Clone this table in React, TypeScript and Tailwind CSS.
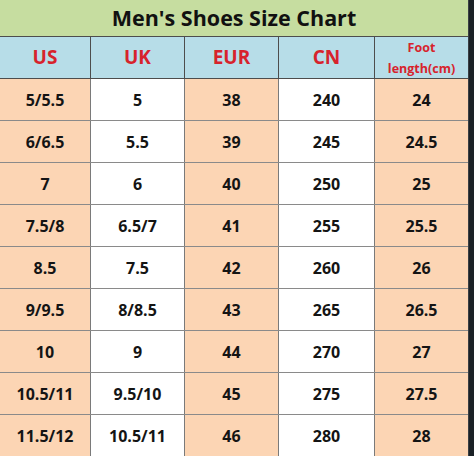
import React from "react";

const rows = [
  ["5/5.5", "5", "38", "240", "24"],
  ["6/6.5", "5.5", "39", "245", "24.5"],
  ["7", "6", "40", "250", "25"],
  ["7.5/8", "6.5/7", "41", "255", "25.5"],
  ["8.5", "7.5", "42", "260", "26"],
  ["9/9.5", "8/8.5", "43", "265", "26.5"],
  ["10", "9", "44", "270", "27"],
  ["10.5/11", "9.5/10", "45", "275", "27.5"],
  ["11.5/12", "10.5/11", "46", "280", "28"],
];

const widths = ["w-[91px]", "w-[94px]", "w-[94px]", "w-[96px]", "w-[93px]"];

export default function App() {
  return (
    <div className="flex w-[474px] h-[456px] overflow-hidden bg-[#1b2126]" style={{ fontFamily: "'Open Sans', 'Liberation Sans', sans-serif" }}>
      <div className="flex flex-col w-[469px] border-r border-[#3a3f44]">
        {/* title */}
        <div className="h-[37px] bg-[#c6dda0] border-b border-[#4d4d4d] flex items-center justify-center text-[21.5px] font-bold text-[#111] shrink-0">
          Men's Shoes Size Chart
        </div>
        {/* header */}
        <div className="flex h-[42px] bg-[#b7dde8] border-b border-[#4d4d4d] shrink-0">
          {["US", "UK", "EUR", "CN"].map((h, i) => (
            <div key={h} className={`${widths[i]} flex items-center justify-center border-r border-[#4d4d4d] text-[19px] font-bold text-[#d7232c]`}>
              {h}
            </div>
          ))}
          <div className={`${widths[4]} flex flex-col items-center justify-center text-[12.5px] leading-[21px] font-bold text-[#d7232c]`}>
            <span>Foot</span>
            <span>length(cm)</span>
          </div>
        </div>
        {/* body */}
        {rows.map((r, ri) => (
          <div key={ri} className="flex h-[42px] border-b border-[#8a8a8a] shrink-0">
            {r.map((c, ci) => (
              <div
                key={ci}
                className={`${widths[ci]} flex items-center justify-center text-[16px] font-bold text-[#141414] ${ci < 4 ? "border-r border-[#7a7a7a]" : ""} ${ci === 1 || ci === 3 ? "bg-white" : "bg-[#fcd5b4]"}`}
              >
                {c}
              </div>
            ))}
          </div>
        ))}
      </div>
    </div>
  );
}
